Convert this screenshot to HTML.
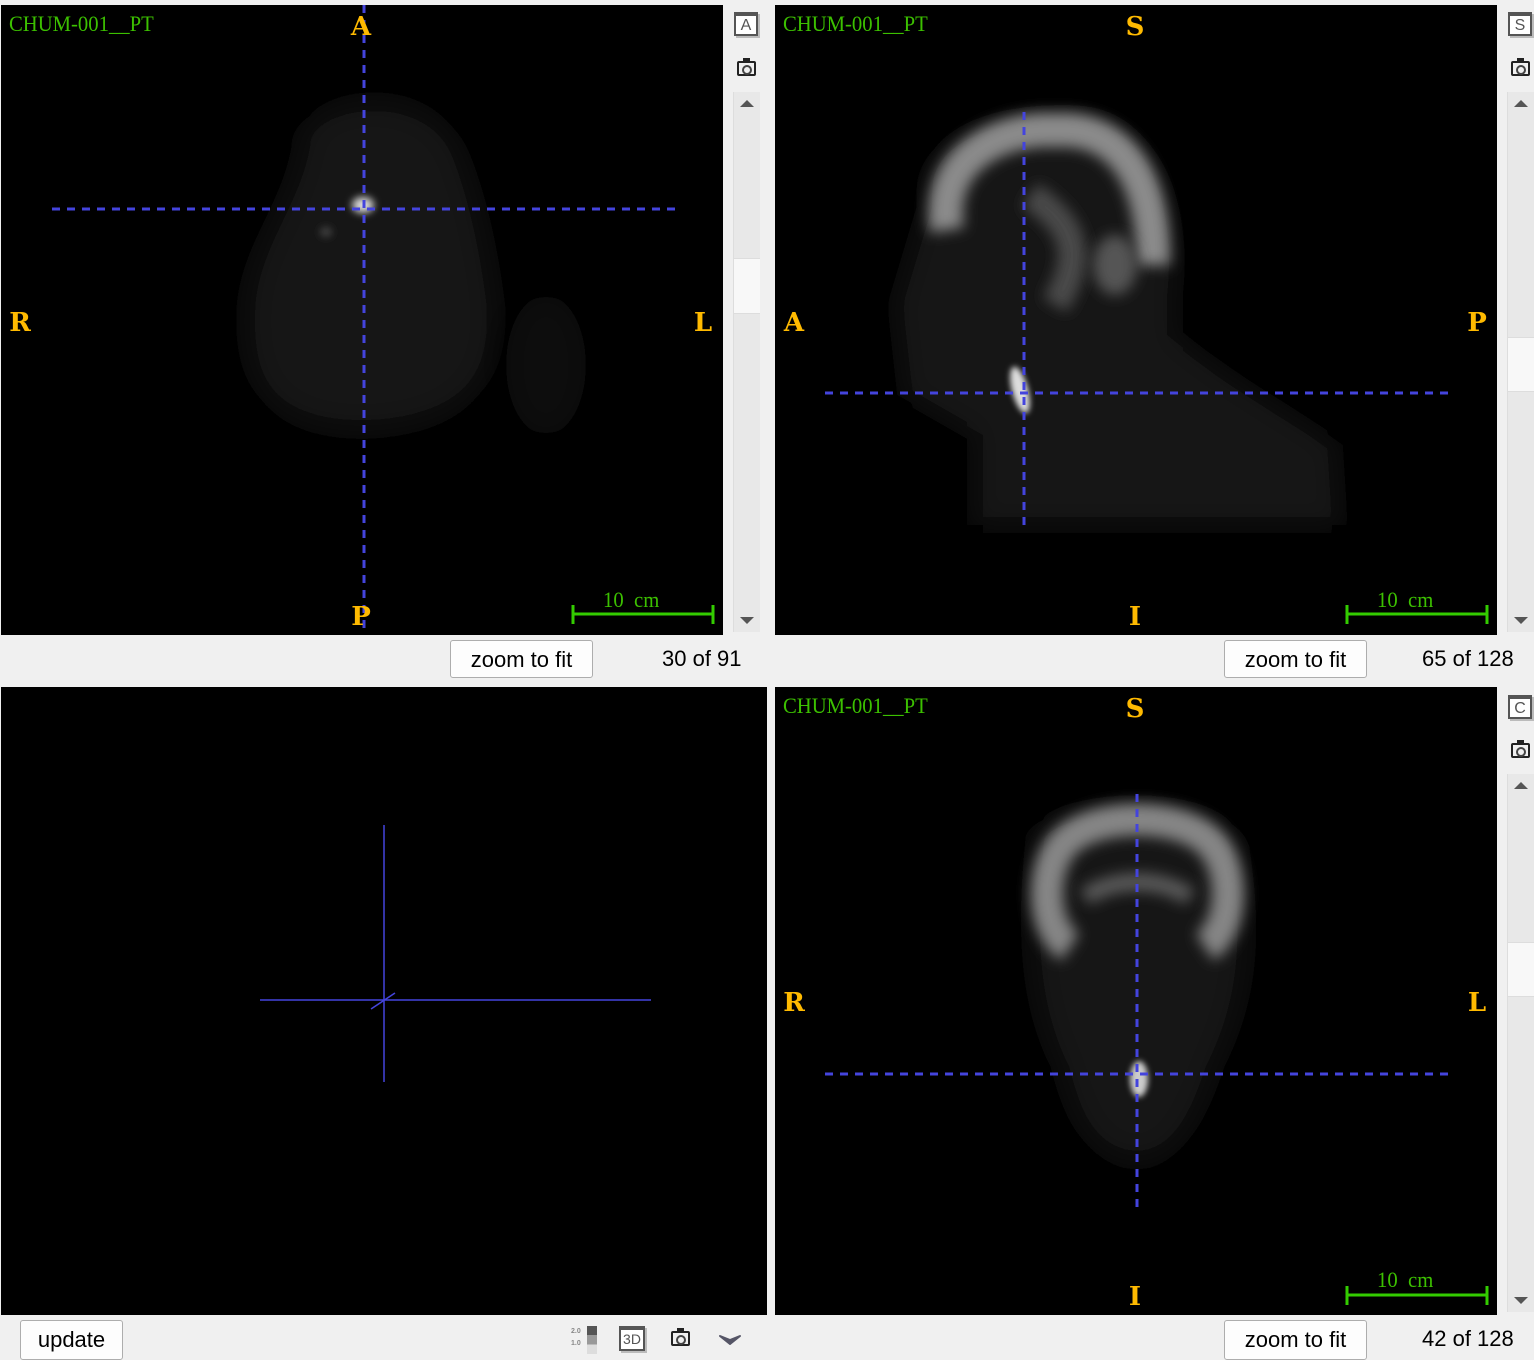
<!DOCTYPE html>
<html><head><meta charset="utf-8"><style>
body{margin:0;width:1534px;height:1354px;background:#f0f0f0;position:relative;overflow:hidden;font-family:"Liberation Sans",sans-serif}
.v{position:absolute;background:#000;overflow:hidden}
.a{position:absolute}
.tt{position:absolute;color:#3cc000;font-family:"Liberation Serif",serif;font-size:22px;line-height:1;transform:scaleX(0.94);transform-origin:left}
.o{position:absolute;color:#ffba00;font-family:"DejaVu Serif",serif;font-weight:bold;font-size:26px;line-height:1;transform:translateX(-50%)}
.btn{position:absolute;background:#fdfdfd;border:1px solid #adadad;border-radius:3px;font-size:22px;color:#000;text-align:center;line-height:38px;height:38px;box-sizing:border-box}
.cnt{position:absolute;font-size:22px;color:#000;line-height:1}
.sb{position:absolute;width:26px;background:#e8e8e8;border-left:1px solid #ddd}
.sbt{position:absolute;left:0;width:26px;background:#f8f8f8;border-top:1px solid #ddd;border-bottom:1px solid #ddd}
.ico{position:absolute;width:24px;height:24px;border:2px solid #555;box-sizing:border-box;background:#fff;font-size:16px;text-align:center;line-height:19px;color:#555;border-top-width:4px;box-shadow:2px 2px 0 #bbb}
.cam{position:absolute;width:19px;height:15px;border:2px solid #222;border-radius:2px;box-sizing:border-box}
.cam:after{content:"";position:absolute;left:3px;top:2px;width:6px;height:6px;border:2px solid #444;border-radius:50%}
.cam:before{content:"";position:absolute;left:4px;top:-5px;width:7px;height:3px;background:#222}
</style></head><body>

<!-- TOP LEFT axial -->
<div class="v" style="left:1px;top:5px;width:722px;height:630px">
<svg width="722" height="630" style="position:absolute;left:0;top:0">
<defs>
<filter id="b1" filterUnits="userSpaceOnUse" x="0" y="0" width="722" height="630"><feGaussianBlur stdDeviation="14"/></filter>
<filter id="b2" filterUnits="userSpaceOnUse" x="0" y="0" width="722" height="630"><feGaussianBlur stdDeviation="4"/></filter>
</defs>
<path d="M300,140 C300,90 430,70 460,150 C480,200 490,260 495,300 C500,380 460,420 365,425 C270,425 240,380 245,300 C250,240 290,200 300,140 Z" fill="#121212" filter="url(#b1)"/>
<ellipse cx="545" cy="360" rx="40" ry="70" fill="#090909" filter="url(#b1)"/>
<ellipse cx="362" cy="200" rx="11" ry="8" fill="#ddd" filter="url(#b2)"/>
<ellipse cx="325" cy="227" rx="6" ry="5" fill="#444" filter="url(#b2)"/>
<line x1="363" y1="0" x2="363" y2="630" stroke="#4444dd" stroke-width="3" stroke-dasharray="8,7"/>
<line x1="51" y1="204" x2="677" y2="204" stroke="#4444dd" stroke-width="3" stroke-dasharray="8,7"/>
<line x1="572" y1="609" x2="712" y2="609" stroke="#33cc00" stroke-width="3"/>
<line x1="572" y1="600" x2="572" y2="619" stroke="#33cc00" stroke-width="3"/>
<line x1="712" y1="600" x2="712" y2="619" stroke="#33cc00" stroke-width="3"/>
</svg>
<div class="tt" style="left:8px;top:8px">CHUM-001__PT</div>
<div class="o" style="left:360px;top:9px">A</div>
<div class="o" style="left:19px;top:305px">R</div>
<div class="o" style="left:702px;top:305px">L</div>
<div class="o" style="left:360px;top:599px">P</div>
<div class="tt" style="left:602px;top:584px">10&nbsp; cm</div>
</div>
<div class="ico" style="left:734px;top:12px">A</div>
<div class="cam" style="left:737px;top:61px"></div>
<div class="sb" style="left:733px;top:92px;height:540px"><div class="sbt" style="top:166px;height:54px"></div><div class="a" style="left:6px;top:8px;border:7px solid transparent;border-bottom-color:#555;border-top:0"></div><div class="a" style="left:6px;top:525px;border:7px solid transparent;border-top-color:#555;border-bottom:0"></div></div>
<div class="btn" style="left:450px;top:640px;width:143px">zoom to fit</div>
<div class="cnt" style="left:662px;top:648px">30 of 91</div>

<!-- TOP RIGHT sagittal -->
<div class="v" style="left:775px;top:5px;width:722px;height:630px">
<svg width="722" height="630" style="position:absolute;left:0;top:0">
<defs>
<filter id="c1" filterUnits="userSpaceOnUse" x="0" y="0" width="722" height="630"><feGaussianBlur stdDeviation="12"/></filter>
<filter id="c2" filterUnits="userSpaceOnUse" x="0" y="0" width="722" height="630"><feGaussianBlur stdDeviation="7"/></filter>
<filter id="c3" filterUnits="userSpaceOnUse" x="0" y="0" width="722" height="630"><feGaussianBlur stdDeviation="3"/></filter>
</defs>
<path d="M150,200 C140,130 220,105 300,108 C380,110 410,200 400,290 L400,330 C460,380 520,410 560,440 L565,520 L200,520 L200,430 L130,390 L120,300 Z" fill="#141414" filter="url(#c1)"/>
<path d="M172,225 C160,150 230,122 280,125 C350,120 380,180 378,260" fill="none" stroke="#8a8a8a" stroke-width="34" filter="url(#c2)"/>
<path d="M255,190 C300,220 310,250 280,300" fill="none" stroke="#4a4a4a" stroke-width="28" filter="url(#c2)"/>
<ellipse cx="340" cy="260" rx="22" ry="30" fill="#555" filter="url(#c2)"/>
<ellipse cx="245" cy="385" rx="8" ry="24" fill="#ddd" filter="url(#c3)" transform="rotate(-15 245 385)"/>
<line x1="249" y1="107" x2="249" y2="523" stroke="#4444dd" stroke-width="3" stroke-dasharray="8,7"/>
<line x1="50" y1="388" x2="677" y2="388" stroke="#4444dd" stroke-width="3" stroke-dasharray="8,7"/>
<line x1="572" y1="609" x2="712" y2="609" stroke="#33cc00" stroke-width="3"/>
<line x1="572" y1="600" x2="572" y2="619" stroke="#33cc00" stroke-width="3"/>
<line x1="712" y1="600" x2="712" y2="619" stroke="#33cc00" stroke-width="3"/>
</svg>
<div class="tt" style="left:8px;top:8px">CHUM-001__PT</div>
<div class="o" style="left:360px;top:9px">S</div>
<div class="o" style="left:19px;top:305px">A</div>
<div class="o" style="left:702px;top:305px">P</div>
<div class="o" style="left:360px;top:599px">I</div>
<div class="tt" style="left:602px;top:584px">10&nbsp; cm</div>
</div>
<div class="ico" style="left:1508px;top:12px">S</div>
<div class="cam" style="left:1511px;top:61px"></div>
<div class="sb" style="left:1507px;top:92px;height:540px"><div class="sbt" style="top:245px;height:53px"></div><div class="a" style="left:6px;top:8px;border:7px solid transparent;border-bottom-color:#555;border-top:0"></div><div class="a" style="left:6px;top:525px;border:7px solid transparent;border-top-color:#555;border-bottom:0"></div></div>
<div class="btn" style="left:1224px;top:640px;width:143px">zoom to fit</div>
<div class="cnt" style="left:1422px;top:648px">65 of 128</div>

<!-- BOTTOM LEFT 3D -->
<div class="v" style="left:1px;top:687px;width:766px;height:628px">
<svg width="766" height="628" style="position:absolute;left:0;top:0">
<line x1="383" y1="138" x2="383" y2="395" stroke="#4444dd" stroke-width="1.5"/>
<line x1="259" y1="313" x2="650" y2="313" stroke="#4444dd" stroke-width="1.5"/>
<line x1="370" y1="322" x2="394" y2="306" stroke="#4444dd" stroke-width="1.5"/>
</svg>
</div>
<div class="btn" style="left:20px;top:1320px;width:103px;height:40px">update</div>
<div class="a" style="left:571px;top:1326px;font-size:7px;color:#888;line-height:12px;font-weight:bold">2.0<br>1.0</div>
<div class="a" style="left:587px;top:1326px;width:10px;height:28px;background:linear-gradient(#555 0,#555 33%,#999 33%,#999 66%,#ddd 66%)"></div>
<div class="ico" style="left:619px;top:1326px;width:26px;height:25px;font-size:14px">3D</div>
<div class="cam" style="left:671px;top:1331px"></div>
<svg class="a" style="left:718px;top:1333px" width="24" height="14"><path d="M2,3 L12,11 L22,3 L12,7 Z" fill="#556" stroke="#556" stroke-width="2" stroke-linejoin="round"/></svg>

<!-- BOTTOM RIGHT coronal -->
<div class="v" style="left:775px;top:687px;width:722px;height:628px">
<svg width="722" height="628" style="position:absolute;left:0;top:0">
<defs>
<filter id="d1" filterUnits="userSpaceOnUse" x="0" y="0" width="722" height="628"><feGaussianBlur stdDeviation="14"/></filter>
<filter id="d2" filterUnits="userSpaceOnUse" x="0" y="0" width="722" height="628"><feGaussianBlur stdDeviation="7"/></filter>
<filter id="d3" filterUnits="userSpaceOnUse" x="0" y="0" width="722" height="628"><feGaussianBlur stdDeviation="3"/></filter>
</defs>
<path d="M260,150 C270,110 450,100 465,160 C480,260 470,320 440,380 C420,440 400,470 363,475 C320,470 300,440 285,380 C255,320 250,250 260,150 Z" fill="#151515" filter="url(#d1)"/>
<path d="M295,260 C265,240 265,180 290,155 C320,125 405,125 435,155 C460,180 460,240 430,260" fill="none" stroke="#858585" stroke-width="32" filter="url(#d2)"/>
<path d="M310,210 C340,190 385,190 415,210" fill="none" stroke="#5a5a5a" stroke-width="18" filter="url(#d2)"/>
<ellipse cx="364" cy="392" rx="9" ry="18" fill="#ccc" filter="url(#d3)"/>
<line x1="362" y1="107" x2="362" y2="523" stroke="#4444dd" stroke-width="3" stroke-dasharray="8,7"/>
<line x1="50" y1="387" x2="677" y2="387" stroke="#4444dd" stroke-width="3" stroke-dasharray="8,7"/>
<line x1="572" y1="608" x2="712" y2="608" stroke="#33cc00" stroke-width="3"/>
<line x1="572" y1="599" x2="572" y2="618" stroke="#33cc00" stroke-width="3"/>
<line x1="712" y1="599" x2="712" y2="618" stroke="#33cc00" stroke-width="3"/>
</svg>
<div class="tt" style="left:8px;top:8px">CHUM-001__PT</div>
<div class="o" style="left:360px;top:9px">S</div>
<div class="o" style="left:19px;top:303px">R</div>
<div class="o" style="left:702px;top:303px">L</div>
<div class="o" style="left:360px;top:597px">I</div>
<div class="tt" style="left:602px;top:582px">10&nbsp; cm</div>
</div>
<div class="ico" style="left:1508px;top:695px">C</div>
<div class="cam" style="left:1511px;top:743px"></div>
<div class="sb" style="left:1507px;top:774px;height:538px"><div class="sbt" style="top:168px;height:53px"></div><div class="a" style="left:6px;top:8px;border:7px solid transparent;border-bottom-color:#555;border-top:0"></div><div class="a" style="left:6px;top:523px;border:7px solid transparent;border-top-color:#555;border-bottom:0"></div></div>
<div class="btn" style="left:1224px;top:1320px;width:143px;height:40px">zoom to fit</div>
<div class="cnt" style="left:1422px;top:1328px">42 of 128</div>
</body></html>
